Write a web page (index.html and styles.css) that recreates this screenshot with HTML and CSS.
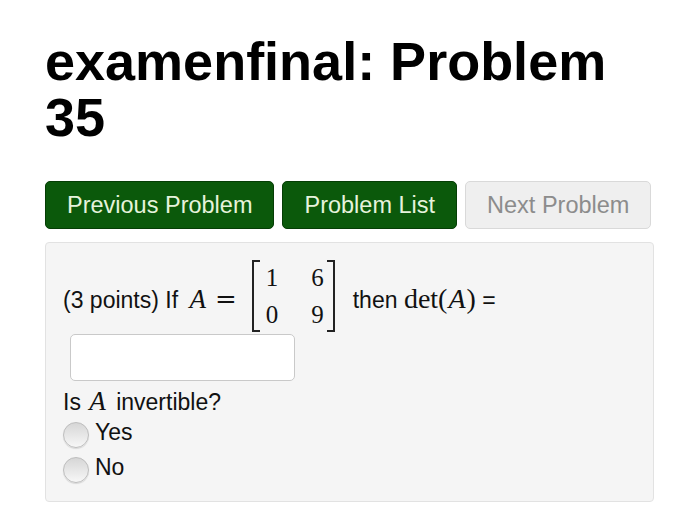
FILE: index.html
```html
<!DOCTYPE html>
<html lang="en">
<head>
	<meta charset="UTF-8">
	<meta name="viewport" content="width=device-width, initial-scale=1.0">
	<title>examenfinal: Problem 35</title>
	<link rel="stylesheet" href="styles.css">
</head>
<body>
	<div class="page">
		<h1 class="page__title">examenfinal: Problem 35</h1>
		<div class="nav">
			<button class="nav__btn">Previous Problem</button>
			<button class="nav__btn">Problem List</button>
			<button class="nav__btn nav__btn--disabled" disabled>Next Problem</button>
		</div>
		<div class="problem">
			<p class="problem__line">(3 points) If <span class="math"><i>A</i><span class="math__rel">=</span></span><span class="matrix"><span class="matrix__inner"><span class="matrix__bracket"></span><span class="matrix__cells"><span>1</span><span>6</span><span>0</span><span>9</span></span><span class="matrix__bracket matrix__bracket--right"></span></span></span><span class="problem__then">then <span class="math">det(<i>A</i>)</span> =</span></p>
			<div class="problem__answer"><input type="text" class="problem__input"></div>
			<p class="problem__ask">Is <span class="math"><i>A</i></span> invertible?</p>
			<label class="radio"><input type="radio" name="inv" class="radio__input"><span class="radio__text">Yes</span></label>
			<label class="radio"><input type="radio" name="inv" class="radio__input"><span class="radio__text">No</span></label>
		</div>
	</div>
</body>
</html>
```

FILE: styles.css
```css
*{
	margin: 0;
	padding: 0;
	box-sizing: border-box;
}
body{
	background-color: #fff;
	color: #111;
	font-family: "Liberation Sans", Arial, sans-serif;
}

.page{
	padding: 33px 46px 0 45px;
}

.page__title{
	font-size: 54px;
	line-height: 56px;
	font-weight: bold;
	color: #000;
}

.nav{
	display: flex;
	gap: 8px;
	margin-top: 36px;
}

.nav__btn{
	height: 48px;
	padding: 0 21px;
	font-family: "Liberation Sans", Arial, sans-serif;
	font-size: 23.5px;
	color: #e6f3dc;
	background-color: #0b590b;
	border: 1px solid #053d05;
	border-radius: 5px;
}

.nav__btn--disabled{
	color: #8c8c8c;
	background-color: #efefef;
	border-color: #d9d9d9;
}

.problem{
	margin-top: 13px;
	padding: 17px 17px 14px 17px;
	background-color: #f5f5f5;
	border: 1px solid #e2e2e2;
	border-radius: 4px;
	font-size: 23px;
}

.problem__line{
	line-height: 30px;
}

.math{
	font-family: "Liberation Serif", "Times New Roman", serif;
	font-size: 27px;
}
.math i{
	margin: 0 0 0 5px;
}
.math__rel{
	font-family: "DejaVu Serif", serif;
	font-size: 26px;
	margin: 0 15px 0 9px;
}

.matrix{
	display: inline-block;
	overflow: hidden;
	vertical-align: -24px;
}
.matrix__inner{
	display: flex;
	height: 72px;
}
.matrix__bracket{
	width: 8px;
	border: 2px solid #222;
	border-right: none;
}
.matrix__bracket--right{
	border-right: 2px solid #222;
	border-left: none;
}
.matrix__cells{
	display: grid;
	grid-template-columns: auto auto;
	column-gap: 33px;
	align-content: center;
	row-gap: 6px;
	padding: 0 3px 0 6px;
	font-family: "Liberation Serif", "Times New Roman", serif;
	font-size: 25px;
	line-height: 31px;
}

.problem__then{
	margin-left: 18px;
}
.problem__then .math{
	font-size: 28px;
}
.problem__then .math i{
	margin: 0 1px;
}

.problem__answer{
	margin-top: 2px;
}
.problem__input{
	width: 225px;
	height: 47px;
	margin-left: 7px;
	background-color: #fff;
	border: 1px solid #c9c9c9;
	border-radius: 5px;
	outline: none;
}

.problem__ask{
	margin-top: 5px;
	line-height: 30px;
}
.problem__ask .math i{
	margin: 0 4px 0 2px;
}

.radio{
	display: flex;
	align-items: center;
	height: 35px;
}
.radio__input{
	appearance: none;
	width: 26px;
	height: 26px;
	margin-right: 6px;
	border: 1px solid #bdbdbd;
	border-radius: 50%;
	background: linear-gradient(#d6d6d6, #f7f7f7);
	box-shadow: 0 1px 1px rgba(0,0,0,0.12);
}
.radio__text{
	padding-bottom: 6px;
	line-height: 30px;
}
```
